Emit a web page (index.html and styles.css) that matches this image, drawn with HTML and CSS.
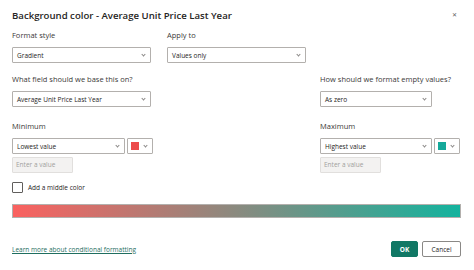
FILE: index.html
```html
<!DOCTYPE html>
<html lang="en">
<head>
  <meta charset="UTF-8">
  <title>Background color</title>
  <link rel="stylesheet" href="styles.css">
</head>
<body>

  <!-- Conditional formatting dialog -->
  <div class="dialog">
    <div class="dialog-header">
      <h1>Background color - Average Unit Price Last Year</h1>
      <span class="close">&#x2715;</span>
    </div>

    <!-- Format style / Apply to -->
    <div class="row">
      <div class="field">
        <label>Format style</label>
        <div class="select w139"><span>Gradient</span><span class="chev"></span></div>
      </div>
      <div class="field">
        <label>Apply to</label>
        <div class="select w139"><span>Values only</span><span class="chev"></span></div>
      </div>
    </div>

    <!-- Base field / empty values -->
    <div class="row split">
      <div class="field">
        <label>What field should we base this on?</label>
        <div class="select w139"><span>Average Unit Price Last Year</span><span class="chev"></span></div>
      </div>
      <div class="field right-col">
        <label>How should we format empty values?</label>
        <div class="select w112"><span>As zero</span><span class="chev"></span></div>
      </div>
    </div>

    <!-- Minimum / Maximum -->
    <div class="row split minmax">
      <div class="field">
        <label>Minimum</label>
        <div class="pick">
          <div class="select w113"><span>Lowest value</span><span class="chev"></span></div>
          <div class="swatch-btn"><span class="swatch red"></span><span class="chev"></span></div>
        </div>
        <div class="value-input">Enter a value</div>
      </div>
      <div class="field right-col">
        <label>Maximum</label>
        <div class="pick">
          <div class="select w112"><span>Highest value</span><span class="chev"></span></div>
          <div class="swatch-btn"><span class="swatch teal"></span><span class="chev"></span></div>
        </div>
        <div class="value-input">Enter a value</div>
      </div>
    </div>

    <div class="check-row">
      <span class="checkbox"></span>
      <span>Add a middle color</span>
    </div>

    <div class="gradient-bar"></div>

    <!-- Footer -->
    <div class="footer">
      <a href="#" class="learn">Learn more about conditional formatting</a>
      <div class="buttons">
        <button class="btn primary">OK</button>
        <button class="btn">Cancel</button>
      </div>
    </div>
  </div>

</body>
</html>
```

FILE: styles.css
```css
body {
  margin: 0;
  background-color: #ffffff;
  font-family: "Open Sans", "Noto Sans", sans-serif;
  color: #252423;
}

.dialog {
  width: 474px;
  height: 270px;
  box-sizing: border-box;
  padding: 0 13px 0 12px;
}

.dialog-header {
  display: flex;
  justify-content: space-between;
  align-items: center;
  height: 30px;
}

.dialog-header h1 {
  margin: 0;
  font-size: 9.6px;
  font-weight: 600;
  color: #252423;
}

.close {
  font-size: 6px;
  color: #605e5c;
  margin-right: 4px;
}

.row {
  display: flex;
  gap: 16px;
}

.row.split {
  justify-content: space-between;
  margin-top: 11px;
}

.row.minmax {
  margin-top: 14px;
}

.right-col {
  width: 141px;
}

.field label {
  display: block;
  font-size: 7.5px;
  color: #3b3a39;
  height: 11px;
  line-height: 11px;
  margin-bottom: 6px;
}

.select {
  display: flex;
  justify-content: space-between;
  align-items: center;
  box-sizing: border-box;
  height: 16px;
  padding: 0 5px 0 4px;
  border: 1px solid #b3b0ad;
  border-radius: 1px;
  font-size: 6.5px;
  color: #252423;
}

.w139 { width: 139px; }
.w113 { width: 113px; }
.w112 { width: 112px; }

.chev {
  width: 2px;
  height: 2px;
  border-right: 1px solid #8a8886;
  border-bottom: 1px solid #8a8886;
  transform: rotate(45deg);
  margin-top: -2px;
}

.pick {
  display: flex;
  gap: 2px;
}

.swatch-btn {
  display: flex;
  align-items: center;
  justify-content: space-between;
  box-sizing: border-box;
  width: 26px;
  height: 16px;
  padding: 0 5px 0 3px;
  border: 1px solid #b3b0ad;
  border-radius: 1px;
}

.swatch {
  width: 8px;
  height: 8px;
}

.swatch.red { background-color: #ec4b4b; }
.swatch.teal { background-color: #15a99a; }

.value-input {
  box-sizing: border-box;
  width: 61px;
  height: 16px;
  margin-top: 3px;
  padding-left: 3px;
  line-height: 14px;
  font-size: 6.5px;
  color: #a19f9d;
  background-color: #f3f2f1;
  border: 1px solid #e1dfdd;
  border-radius: 1px;
}

.check-row {
  display: flex;
  align-items: center;
  gap: 5px;
  margin-top: 9px;
  font-size: 6.5px;
  color: #252423;
}

.checkbox {
  box-sizing: border-box;
  width: 11px;
  height: 11px;
  border: 1px solid #605e5c;
  border-radius: 1px;
}

.gradient-bar {
  height: 14px;
  margin-top: 11px;
  box-sizing: border-box;
  border: 1px solid #b3b0ad;
  background: linear-gradient(to right, #fa615f, #8a8a7f 50%, #14b39e);
}

.footer {
  display: flex;
  justify-content: space-between;
  align-items: center;
  margin-top: 23px;
}

.learn {
  font-size: 6.5px;
  color: #1f6e5f;
}

.buttons {
  display: flex;
  gap: 4px;
}

.btn {
  box-sizing: border-box;
  height: 16px;
  padding: 0 8px;
  font-family: "Open Sans", "Noto Sans", sans-serif;
  font-size: 6.5px;
  color: #252423;
  background-color: #ffffff;
  border: 1px solid #8a8886;
  border-radius: 2px;
}

.btn.primary {
  width: 27px;
  padding: 0;
  color: #ffffff;
  font-weight: 700;
  background-color: #117865;
  border-color: #117865;
}

.btn:last-child {
  width: 39px;
  padding: 0;
}
```
